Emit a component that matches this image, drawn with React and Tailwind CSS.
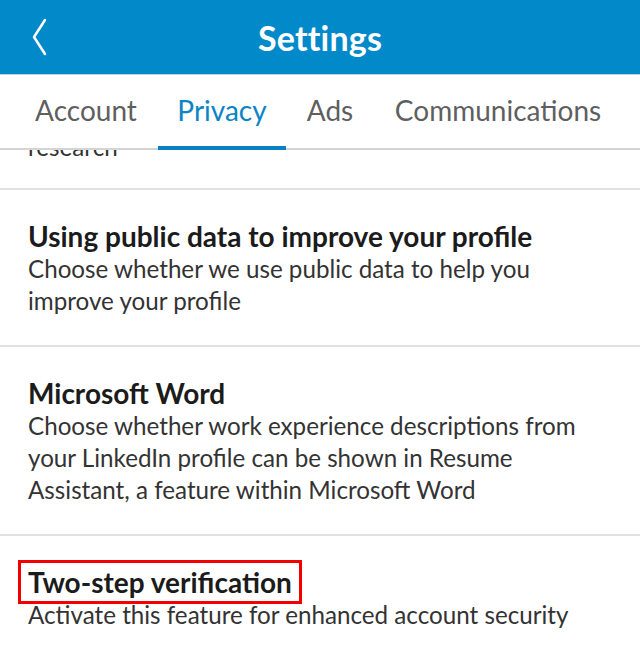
import React from "react";

const font = { fontFamily: '"Lato", "Noto Sans", sans-serif' };

function Item({ title, lines, highlight }) {
  return (
    <div className="border-t-2 border-[#e0e0e0] pt-[29px] pb-[28px] pl-[28px] pr-[10px]">
      {highlight ? (
        <div className="w-fit -ml-[10px] -my-[5px] border-[3px] border-[#f20000] px-[7px] py-[2px] text-[28px] leading-[34px] font-bold text-[#1b1b1b]">
          {title}
        </div>
      ) : (
        <div className="text-[28px] leading-[34px] font-bold text-[#1b1b1b]">{title}</div>
      )}
      {lines.map((l, i) => (
        <div key={i} className="text-[24.2px] leading-[32px] text-[#333333] whitespace-nowrap">
          {l}
        </div>
      ))}
    </div>
  );
}

export default function App() {
  return (
    <div className="w-[640px] h-[650px] overflow-hidden bg-white" style={font}>
      <div className="h-[74px] bg-[#0289c9] relative flex items-center justify-center">
        <svg className="absolute left-[31px] top-[18px]" width="18" height="38" viewBox="0 0 18 38">
          <polyline points="14,2 3,19 14,36" fill="none" stroke="white" strokeWidth="2.5" strokeLinecap="round" strokeLinejoin="round" />
        </svg>
        <div className="text-white text-[34px] font-bold tracking-[0.2px]">Settings</div>
      </div>
      <div className="h-[76px] border-t border-[#c6d3dc] border-b-2 border-b-[#d4d4d4] flex items-stretch">
        <div className="w-[158px] flex items-center justify-center pl-[14px] pb-[4px] text-[28px] text-[#5f5f5f]">Account</div>
        <div className="w-[128px] relative flex items-center justify-center pb-[4px] text-[28px] text-[#0a84c6]">
          Privacy
          <div className="absolute left-0 right-0 bottom-[-2px] h-[4px] bg-[#0a80c4]" />
        </div>
        <div className="w-[86px] flex items-center justify-center pl-[2px] pb-[4px] text-[28px] text-[#5f5f5f]">Ads</div>
        <div className="w-[238px] flex items-center justify-center pl-[14px] pb-[4px] text-[28px] text-[#5f5f5f] whitespace-nowrap">Communications</div>
      </div>
      <div className="h-[38px] overflow-hidden pl-[28px]">
        <div className="-mt-[19px] text-[24.2px] leading-[32px] text-[#333333]">research</div>
      </div>
      <Item
        title="Using public data to improve your profile"
        lines={["Choose whether we use public data to help you", "improve your profile"]}
      />
      <Item
        title="Microsoft Word"
        lines={[
          "Choose whether work experience descriptions from",
          "your LinkedIn profile can be shown in Resume",
          "Assistant, a feature within Microsoft Word",
        ]}
      />
      <Item highlight title="Two-step verification" lines={["Activate this feature for enhanced account security"]} />
    </div>
  );
}
